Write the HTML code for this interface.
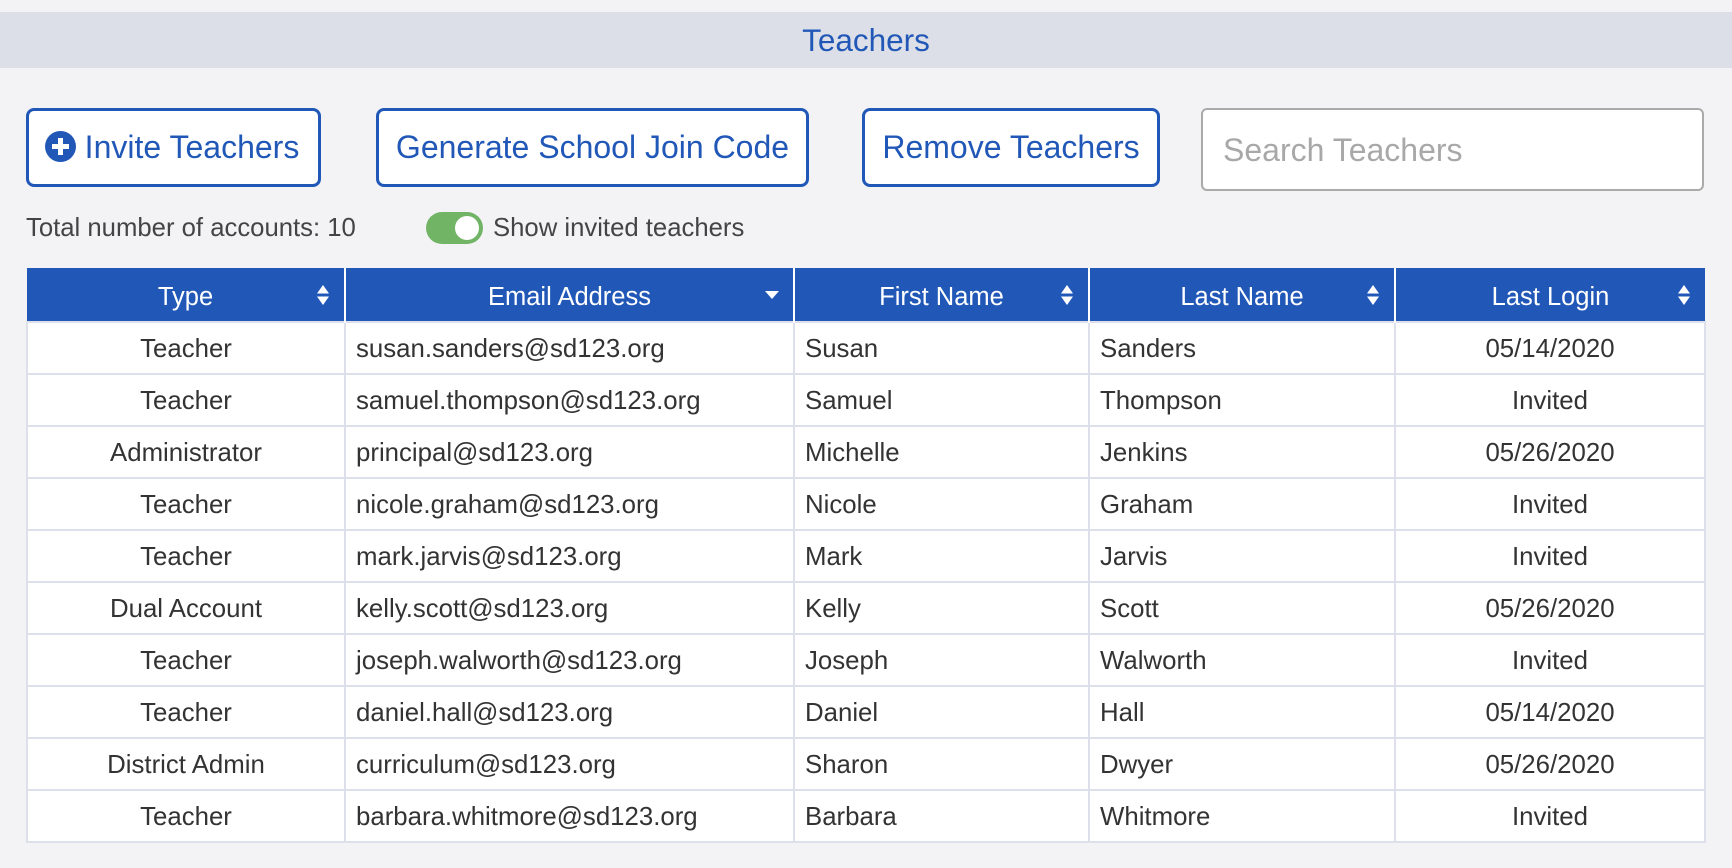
<!DOCTYPE html>
<html><head><style>
*{box-sizing:border-box;margin:0;padding:0}
body{width:1732px;height:868px;background:#f3f3f6;font-family:"Liberation Sans",Arial,sans-serif;position:relative;overflow:hidden;color:#333}
.band{position:absolute;left:0;top:12px;width:1732px;height:56px;background:#dcdfe7;text-align:center;color:#2158b8;font-size:31.5px;line-height:56px}
.btn{position:absolute;top:108px;height:79px;border:3px solid #2158b8;border-radius:8px;background:#fff;color:#2158b8;font-size:32px;line-height:73px;text-align:center;white-space:nowrap}
.search{position:absolute;left:1201px;top:108px;width:503px;height:83px;border:2px solid #aaa;border-radius:6px;background:#fff;color:#a8a8a8;font-size:32px;line-height:81px;padding-left:20px}
.info{position:absolute;top:212px;font-size:25.7px;line-height:32px;color:#444}
.tog{position:absolute;left:426px;top:212px;width:57px;height:32px;border-radius:16px;background:#72b466}
.tog:after{content:"";position:absolute;right:4px;top:4px;width:24px;height:24px;border-radius:50%;background:#fff}
table{position:absolute;left:26px;top:268px;border-collapse:collapse;table-layout:fixed;width:1678px}
th{background:#2158b8;color:#fff;font-weight:normal;font-size:25.5px;height:54px;position:relative;border-left:2px solid #fff;padding-top:5px}
th:first-child{border-left:none}
td{background:#fff;height:52px;font-size:25.8px;border:2px solid #dde0ea;padding-left:10px;color:#333;padding-top:3px}
td.c{text-align:center;padding-left:0}
.s{position:absolute;right:14px;top:16px;width:14px;height:22px}
</style></head><body>
<div class="band">Teachers</div>
<div class="btn" style="left:26px;width:295px"><span style="display:inline-block;width:31px;height:31px;border-radius:50%;background:#2158b8;vertical-align:-4px;position:relative;margin-right:9px;margin-left:-3px"><span style="position:absolute;left:7px;top:13px;width:17px;height:5px;background:#fff"></span><span style="position:absolute;left:13px;top:7px;width:5px;height:17px;background:#fff"></span></span>Invite Teachers</div>
<div class="btn" style="left:376px;width:433px">Generate School Join Code</div>
<div class="btn" style="left:862px;width:298px">Remove Teachers</div>
<div class="search">Search Teachers</div>
<div class="info" style="left:26px">Total number of accounts: 10</div>
<div class="tog"></div>
<div class="info" style="left:493px">Show invited teachers</div>
<table>
<colgroup><col style="width:318px"><col style="width:449px"><col style="width:295px"><col style="width:306px"><col style="width:310px"></colgroup>
<tr><th>Type<svg class="s" viewBox="0 0 14 22"><path d="M7 1L13 9.5H1Z M7 21L13 12.5H1Z" fill="#fff"/></svg></th><th>Email Address<svg class="s" viewBox="0 0 14 22"><path d="M0 7H14L7 15Z" fill="#fff"/></svg></th><th>First Name<svg class="s" viewBox="0 0 14 22"><path d="M7 1L13 9.5H1Z M7 21L13 12.5H1Z" fill="#fff"/></svg></th><th>Last Name<svg class="s" viewBox="0 0 14 22"><path d="M7 1L13 9.5H1Z M7 21L13 12.5H1Z" fill="#fff"/></svg></th><th>Last Login<svg class="s" viewBox="0 0 14 22"><path d="M7 1L13 9.5H1Z M7 21L13 12.5H1Z" fill="#fff"/></svg></th></tr>
<tr><td class="c">Teacher</td><td>susan.sanders@sd123.org</td><td>Susan</td><td>Sanders</td><td class="c">05/14/2020</td></tr>
<tr><td class="c">Teacher</td><td>samuel.thompson@sd123.org</td><td>Samuel</td><td>Thompson</td><td class="c">Invited</td></tr>
<tr><td class="c">Administrator</td><td>principal@sd123.org</td><td>Michelle</td><td>Jenkins</td><td class="c">05/26/2020</td></tr>
<tr><td class="c">Teacher</td><td>nicole.graham@sd123.org</td><td>Nicole</td><td>Graham</td><td class="c">Invited</td></tr>
<tr><td class="c">Teacher</td><td>mark.jarvis@sd123.org</td><td>Mark</td><td>Jarvis</td><td class="c">Invited</td></tr>
<tr><td class="c">Dual Account</td><td>kelly.scott@sd123.org</td><td>Kelly</td><td>Scott</td><td class="c">05/26/2020</td></tr>
<tr><td class="c">Teacher</td><td>joseph.walworth@sd123.org</td><td>Joseph</td><td>Walworth</td><td class="c">Invited</td></tr>
<tr><td class="c">Teacher</td><td>daniel.hall@sd123.org</td><td>Daniel</td><td>Hall</td><td class="c">05/14/2020</td></tr>
<tr><td class="c">District Admin</td><td>curriculum@sd123.org</td><td>Sharon</td><td>Dwyer</td><td class="c">05/26/2020</td></tr>
<tr><td class="c">Teacher</td><td>barbara.whitmore@sd123.org</td><td>Barbara</td><td>Whitmore</td><td class="c">Invited</td></tr>
</table>
</body></html>
